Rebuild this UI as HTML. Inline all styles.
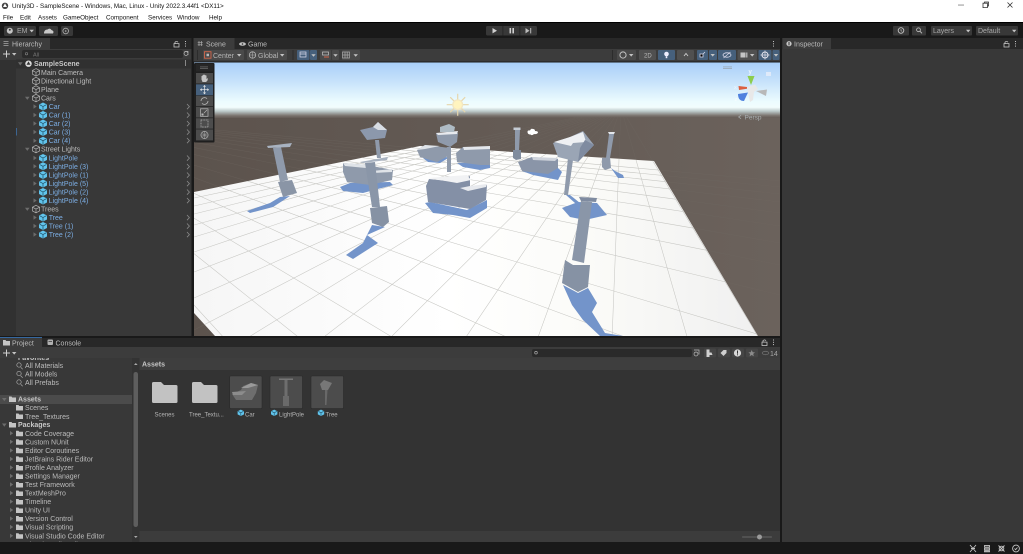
<!DOCTYPE html>
<html><head><meta charset="utf-8"><title>Unity3D</title>
<style>
html,body{margin:0;padding:0;background:#191919;overflow:hidden;width:1023px;height:554px}
svg{display:block;position:absolute;left:0;top:0;overflow:hidden;filter:blur(.3px)}
text{font-family:"Liberation Sans",sans-serif;font-size:7px;fill:#bcbcbc}
.k{fill:#111;font-size:6.3px}
.b{fill:#c8c8c8;font-weight:bold}
.p{fill:#7caee4}
.s{font-size:6px;fill:#b4b4b4}
</style></head><body>
<svg width="1023" height="554" viewBox="0 0 1023 554" xmlns="http://www.w3.org/2000/svg">
<defs>
<linearGradient id="sky" x1="0" y1="0" x2="0" y2="1">
<stop offset="0" stop-color="#a9cff9"/><stop offset=".35" stop-color="#c8e3fb"/><stop offset=".7" stop-color="#ecfcfe"/><stop offset=".8" stop-color="#f2fdfd"/><stop offset=".87" stop-color="#bcc9c9"/><stop offset=".95" stop-color="#7a736e"/><stop offset="1" stop-color="#5f5650"/>
</linearGradient>
<linearGradient id="gr" x1="0" y1="0" x2="1" y2="0"><stop offset="0" stop-color="#5c534d"/><stop offset="1" stop-color="#6b625c"/></linearGradient>
<linearGradient id="pl" x1="0" y1="0" x2="1" y2="0"><stop offset="0" stop-color="#f6f6f6"/><stop offset=".45" stop-color="#ffffff"/><stop offset=".7" stop-color="#fbfbf8"/><stop offset="1" stop-color="#f0f0f0"/></linearGradient>
<clipPath id="plc"><polygon points="194,192 420,146 654,161 758,336 215,336 194,313"/></clipPath>
<clipPath id="gc"><rect x="194" y="117" width="586" height="219"/></clipPath>
<clipPath id="lc"><rect x="0" y="358" width="132" height="184"/></clipPath>
<path id="fam" d="M621 108L194 198M621 108L194 206M621 108L194 214M621 108L194 225M621 108L194 237M621 108L194 252M621 108L194 272M621 108L194 298M621 108L194 330M621 108L244 340M621 108L320 340M621 108L388 340M621 108L464 340M621 108L537 340M621 108L612 340M621 108L688 340M621 108L760 340M17 112L780 181M17 112L780 187M17 112L780 194M17 112L780 202M17 112L780 213M17 112L780 226M17 112L780 243M17 112L780 265M17 112L780 295M17 112L777 340M17 112L633 340M17 112L513 340M17 112L397 340M17 112L302 340M17 112L226 340"/>
<g id="pf"><path d="M4 0L8 2V6L4 8L0 6V2Z" fill="#61c4ec"/><path d="M0.6 2.2L4 4L7.4 2.2M4 4V7.6" stroke="#1f4a5e" stroke-width=".7" fill="none"/></g>
<g id="go"><path d="M4 .3L7.6 2.2V5.9L4 7.8L.4 5.9V2.2Z M.6 2.3L4 4.1L7.4 2.3M4 4.1V7.6" stroke="#b0b0b0" stroke-width=".7" fill="none"/></g>
<path id="ar" d="M0 0L3.2 2.2L0 4.4Z" fill="#6c6c6c"/>
<path id="ad" d="M0 0H4.6L2.3 3.2Z" fill="#6c6c6c"/>
<path id="ch" d="M0 0L2.4 2.6L0 5.2" stroke="#8a8a8a" stroke-width=".8" fill="none"/>
<path id="fo" d="M0 0H2.5L3.2 1H7V5.5H0Z" fill="#c4c4c4"/>
<circle id="mg" cx="3" cy="3" r="2.2" stroke="#aaa" stroke-width=".7" fill="none"/>
<g id="dts"><rect x="0" y="0" width="1" height="1" fill="#c4c4c4"/><rect x="0" y="2.3" width="1" height="1" fill="#c4c4c4"/><rect x="0" y="4.6" width="1" height="1" fill="#c4c4c4"/></g>
<g id="lk"><rect x="0" y="2.6" width="5" height="3.4" fill="none" stroke="#c4c4c4" stroke-width=".8"/><path d="M1 2.6V1.2Q2.5 -.4 4 1.2" stroke="#c4c4c4" stroke-width=".8" fill="none"/></g>
<path id="wd" d="M0 0H4.4L2.2 2.6Z" fill="#c4c4c4"/>
</defs>

<!-- base -->
<rect width="1023" height="554" fill="#191919"/>
<rect width="1023" height="22.5" fill="#fff"/>
<rect y="22" width="1023" height="1" fill="#000"/>

<!-- title & menu -->
<circle cx="5" cy="5.8" r="3.2" fill="#444"/><path d="M5 3.4L7 7H3Z" fill="#fff"/>
<text class="k" x="12" y="8.2">Unity3D - SampleScene - Windows, Mac, Linux - Unity 2022.3.44f1 &lt;DX11&gt;</text>
<text class="k" x="3" y="19.3">File</text><text class="k" x="20" y="19.3">Edit</text><text class="k" x="38" y="19.3">Assets</text><text class="k" x="63" y="19.3">GameObject</text><text class="k" x="106" y="19.3">Component</text><text class="k" x="148" y="19.3">Services</text><text class="k" x="177" y="19.3">Window</text><text class="k" x="209" y="19.3">Help</text>
<rect x="958" y="4.6" width="6" height=".9" fill="#888"/>
<path d="M983 3.2h4.4v4.4h-4.4zM984.5 3.2v-1.2h4v4h-1.1" stroke="#333" stroke-width=".8" fill="none"/>
<path d="M1007.5 2.5l5 5m0-5l-5 5" stroke="#333" stroke-width=".8"/>

<!-- toolbar -->
<rect x="4" y="26" width="32" height="10" rx="1.5" fill="#383838"/>
<circle cx="9.8" cy="30.8" r="3" fill="#c4c4c4"/><circle cx="9.8" cy="29.8" r="1" fill="#383838"/>
<text x="17" y="33.2" style="fill:#a8a8a8">EM</text><use href="#wd" x="29.5" y="29.8"/>
<rect x="39" y="26" width="19" height="10" rx="1.5" fill="#383838"/>
<path d="M44 33.5H53Q54.5 31 51.5 30Q50 27.5 47.5 29.5Q44 29.5 44 33.5Z" fill="#c8c8c8"/>
<rect x="61" y="26" width="12" height="10" rx="1.5" fill="#383838"/>
<circle cx="65.7" cy="31" r="2.8" fill="none" stroke="#b0b0b0" stroke-width=".8"/><circle cx="65.7" cy="31" r=".8" fill="#b0b0b0"/>

<rect x="486" y="26" width="51" height="9.5" rx="1.5" fill="#383838"/>
<rect x="502.5" y="26" width=".8" height="9.5" fill="#222"/><rect x="519.5" y="26" width=".8" height="9.5" fill="#222"/>
<path d="M492.5 28L497 30.7L492.5 33.4Z" fill="#d0d0d0"/>
<rect x="509.5" y="28" width="1.6" height="5.4" fill="#d0d0d0"/><rect x="512.4" y="28" width="1.6" height="5.4" fill="#d0d0d0"/>
<path d="M525.5 28L529.5 30.7L525.5 33.4Z" fill="#bbb"/><rect x="530.2" y="28" width="1" height="5.4" fill="#bbb"/>

<rect x="893" y="26" width="16" height="9.5" rx="1" fill="#383838"/>
<circle cx="901" cy="30.5" r="2.8" fill="none" stroke="#c4c4c4" stroke-width=".9"/><path d="M901 29v1.8l1.2.6" stroke="#c4c4c4" stroke-width=".6" fill="none"/>
<rect x="912" y="26" width="14" height="9.5" rx="1" fill="#383838"/>
<circle cx="918.5" cy="29.8" r="1.9" fill="none" stroke="#c4c4c4" stroke-width=".8"/><path d="M920 31.3l2 2" stroke="#c4c4c4" stroke-width=".9"/>
<rect x="931" y="26" width="41" height="9.5" rx="1" fill="#383838"/>
<text x="933" y="33" style="fill:#a8a8a8">Layers</text><use href="#wd" x="966" y="29.8"/>
<rect x="976" y="26" width="42" height="9.5" rx="1" fill="#383838"/>
<text x="978" y="33" style="fill:#a8a8a8">Default</text><use href="#wd" x="1012" y="29.8"/>

<!-- Hierarchy panel -->
<rect x="0" y="38" width="191.5" height="11" fill="#282828"/>
<rect x="0" y="38" width="50" height="11" fill="#3c3c3c"/>
<path d="M3.5 41.5h5M3.5 43.5h5M3.5 45.5h5" stroke="#a8a8a8" stroke-width=".8"/>
<text x="12" y="46.4">Hierarchy</text>
<use href="#lk" x="174" y="41"/><use href="#dts" x="185" y="41"/>
<rect x="0" y="49" width="191.5" height="11" fill="#3c3c3c"/>
<path d="M3 54h7M6.5 50.5v7" stroke="#d0d0d0" stroke-width="1"/><use href="#wd" x="12" y="53"/>
<rect x="22" y="50" width="161" height="8" rx="2" fill="#2a2a2a"/>
<circle cx="26.5" cy="53.7" r="1.2" fill="none" stroke="#888" stroke-width=".6"/>
<text x="33" y="56.3" style="font-size:5.5px;fill:#777">All</text>
<path d="M184.5 51.5h3.5v3.5M186 55.5a2 2 0 1 1 .01 0" stroke="#bbb" stroke-width=".7" fill="none"/>
<rect x="0" y="60" width="191.5" height="276" fill="#383838"/>
<rect x="0" y="60" width="16" height="276" fill="#313131"/>
<rect x="16" y="59.5" width="175" height="9" fill="#303030"/>
<rect x="16" y="128" width=".9" height="7.5" fill="#3c6a9c"/>
<rect x="185" y="60" width="1" height="6" fill="#888"/>

<use href="#ad" x="18" y="62.3"/>
<circle cx="28.5" cy="63.7" r="3.2" fill="#ddd"/><path d="M28.5 61.4l2 3.4h-4z" fill="#333"/>
<text class="b" x="34" y="66.2">SampleScene</text>
<use href="#go" x="32" y="68.3"/><text x="41" y="75">Main Camera</text>
<use href="#go" x="32" y="77"/><text x="41" y="83.5">Directional Light</text>
<use href="#go" x="32" y="85.5"/><text x="41" y="92">Plane</text>
<use href="#ad" x="25" y="96.7"/><use href="#go" x="32" y="94"/><text x="41" y="100.5">Cars</text>

<use href="#ar" x="33.5" y="104.3"/><use href="#pf" x="39" y="102.5"/><text class="p" x="48.7" y="109">Car</text><use href="#ch" x="187" y="104"/>
<use href="#ar" x="33.5" y="112.8"/><use href="#pf" x="39" y="111"/><text class="p" x="48.7" y="117.5">Car (1)</text><use href="#ch" x="187" y="112.5"/>
<use href="#ar" x="33.5" y="121.3"/><use href="#pf" x="39" y="119.5"/><text class="p" x="48.7" y="126">Car (2)</text><use href="#ch" x="187" y="121"/>
<use href="#ar" x="33.5" y="129.8"/><use href="#pf" x="39" y="128"/><text class="p" x="48.7" y="134.5">Car (3)</text><use href="#ch" x="187" y="129.5"/>
<use href="#ar" x="33.5" y="138.5"/><use href="#pf" x="39" y="136.7"/><text class="p" x="48.7" y="143.2">Car (4)</text><use href="#ch" x="187" y="138"/>

<use href="#ad" x="25" y="147.7"/><use href="#go" x="32" y="145"/><text x="41" y="151.5">Street Lights</text>
<use href="#ar" x="33.5" y="155.8"/><use href="#pf" x="39" y="154"/><text class="p" x="48.7" y="160.5">LightPole</text><use href="#ch" x="187" y="155.5"/>
<use href="#ar" x="33.5" y="164.1"/><use href="#pf" x="39" y="162.3"/><text class="p" x="48.7" y="168.8">LightPole (3)</text><use href="#ch" x="187" y="164"/>
<use href="#ar" x="33.5" y="172.8"/><use href="#pf" x="39" y="171"/><text class="p" x="48.7" y="177.5">LightPole (1)</text><use href="#ch" x="187" y="172.5"/>
<use href="#ar" x="33.5" y="181.3"/><use href="#pf" x="39" y="179.5"/><text class="p" x="48.7" y="186">LightPole (5)</text><use href="#ch" x="187" y="181"/>
<use href="#ar" x="33.5" y="189.8"/><use href="#pf" x="39" y="188"/><text class="p" x="48.7" y="194.5">LightPole (2)</text><use href="#ch" x="187" y="189.5"/>
<use href="#ar" x="33.5" y="198.3"/><use href="#pf" x="39" y="196.5"/><text class="p" x="48.7" y="203">LightPole (4)</text><use href="#ch" x="187" y="198"/>

<use href="#ad" x="25" y="207.7"/><use href="#go" x="32" y="205"/><text x="41" y="211.5">Trees</text>
<use href="#ar" x="33.5" y="215.3"/><use href="#pf" x="39" y="213.5"/><text class="p" x="48.7" y="220">Tree</text><use href="#ch" x="187" y="215"/>
<use href="#ar" x="33.5" y="223.8"/><use href="#pf" x="39" y="222"/><text class="p" x="48.7" y="228.5">Tree (1)</text><use href="#ch" x="187" y="223.5"/>
<use href="#ar" x="33.5" y="232.3"/><use href="#pf" x="39" y="230.5"/><text class="p" x="48.7" y="237">Tree (2)</text><use href="#ch" x="187" y="232"/>

<!-- Scene panel header -->
<rect x="193.5" y="38" width="586.5" height="11" fill="#282828"/>
<rect x="193.5" y="38" width="41" height="11" fill="#3c3c3c"/>
<path d="M199 41v5M201.5 41v5M197.7 42.3h5M197.7 44.8h5" stroke="#aaa" stroke-width=".7"/>
<text x="206" y="46.4">Scene</text>
<ellipse cx="242.5" cy="44" rx="3.4" ry="1.8" fill="#c4c4c4"/><circle cx="242.5" cy="44" r=".8" fill="#282828"/>
<text x="248" y="46.4">Game</text>
<use href="#dts" x="773" y="41"/>
<rect x="193.5" y="49" width="586.5" height="12.5" fill="#3c3c3c"/>
<rect x="197" y="50" width="1" height="10" fill="#2c2c2c"/>
<rect x="203" y="50" width="41" height="10" rx="1" fill="#4a4a4a"/>
<rect x="204.5" y="51.7" width="6.5" height="6.5" fill="none" stroke="#d2664a" stroke-width=".9"/><rect x="206.5" y="53.7" width="2.5" height="2.5" fill="#bbb"/>
<text x="213" y="58" style="fill:#b4b4b4">Center</text><use href="#wd" x="237" y="54"/>
<rect x="247" y="50" width="40" height="10" rx="1" fill="#4a4a4a"/>
<circle cx="252.5" cy="55" r="3.2" fill="none" stroke="#b8b8b8" stroke-width=".8"/><path d="M249.5 55h6M252.5 52v6" stroke="#b8b8b8" stroke-width=".5"/>
<text x="258" y="58" style="fill:#b4b4b4">Global</text><use href="#wd" x="280" y="54"/>
<rect x="292.5" y="50" width="1" height="10" fill="#2c2c2c"/>
<rect x="297" y="50" width="12.5" height="10" rx="1" fill="#46607c"/><rect x="310" y="50" width="7" height="10" rx="1" fill="#46607c"/>
<path d="M300 52h6v5h-6zM300 54h6" stroke="#dde" stroke-width=".7" fill="none"/><use href="#wd" x="311.3" y="54.2"/>
<rect x="320" y="50" width="11" height="10" rx="1" fill="#4a4a4a"/><rect x="332" y="50" width="7" height="10" rx="1" fill="#4a4a4a"/>
<path d="M322.5 52h6v3h-6z" stroke="#c4c4c4" stroke-width=".7" fill="none"/><path d="M324 57h5" stroke="#d2664a" stroke-width="1"/><use href="#wd" x="333.3" y="54.2"/>
<rect x="342" y="50" width="18" height="10" rx="1" fill="#4a4a4a"/>
<path d="M342.5 52h7v6h-7zM345 52v6M347.2 52v6M342.5 55h7" stroke="#aaa" stroke-width=".7" fill="none"/><use href="#wd" x="353.5" y="54.2"/>

<rect x="612" y="50" width="1" height="10" fill="#2c2c2c"/>
<rect x="617" y="50" width="19" height="10" rx="1" fill="#4a4a4a"/>
<circle cx="623" cy="55" r="3.1" fill="none" stroke="#c4c4c4" stroke-width="1"/><use href="#wd" x="629" y="54"/>
<rect x="639" y="50" width="17" height="10" rx="1" fill="#505050"/><text x="644" y="57.6" style="font-size:6px">2D</text>
<rect x="658" y="50" width="17" height="10" rx="1" fill="#46607c"/>
<circle cx="666.5" cy="54" r="2.3" fill="#eef"/><rect x="665.7" y="56.2" width="1.6" height="2" fill="#eef"/>
<rect x="677" y="50" width="17" height="10" rx="1" fill="#505050"/><path d="M684 56l2-2.5 2 2.5" stroke="#ccc" fill="none" stroke-width=".9"/>
<rect x="697" y="50" width="11" height="10" rx="1" fill="#46607c"/><rect x="709" y="50" width="8" height="10" rx="1" fill="#46607c"/>
<path d="M700 57v-3h3v3zM703 54l2-2" stroke="#dde" stroke-width=".8"/><use href="#wd" x="710.5" y="54"/>
<rect x="718" y="50" width="18" height="10" rx="1" fill="#46607c"/>
<ellipse cx="727" cy="55" rx="4" ry="2.2" fill="none" stroke="#dde" stroke-width=".8"/><path d="M723.5 58l7-6" stroke="#dde" stroke-width=".7"/>
<rect x="737.5" y="50" width="19.5" height="10" rx="1" fill="#505050"/><rect x="740.5" y="52.5" width="5" height="5" fill="#c4c4c4"/><rect x="746.2" y="52.5" width="1.2" height="5" fill="#c4c4c4"/><use href="#wd" x="750" y="54"/>
<rect x="758.5" y="50" width="13" height="10" rx="1" fill="#46607c"/><rect x="772.5" y="50" width="7" height="10" rx="1" fill="#46607c"/>
<circle cx="765" cy="55" r="3" fill="none" stroke="#e4e4ee" stroke-width="1"/><path d="M765 50.5v9M760.5 55h9" stroke="#e4e4ee" stroke-width=".7"/><use href="#wd" x="773.8" y="54"/>

<!-- Scene -->
<rect x="193.5" y="61.5" width="586.5" height="1.2" fill="#1c1c1c"/>
<rect x="194" y="62.5" width="586" height="56" fill="url(#sky)"/>
<rect x="194" y="118" width="586" height="218" fill="url(#gr)"/>
<g clip-path="url(#gc)"><use href="#fam" stroke="#726a64" stroke-width=".5" fill="none" opacity=".45"/></g>
<polygon points="194,192 420,146 654,161 758,336 215,336 194,313" fill="url(#pl)"/>
<g clip-path="url(#plc)"><use href="#fam" stroke="#c6c6c2" stroke-width=".55" fill="none"/></g>

<!-- sun -->
<g transform="translate(457.7 104.7)">
<path d="M0-11V11M-11 0H11M-7.5-7.5L7.5 7.5M-7.5 7.5L7.5-7.5" stroke="#e6d6ac" stroke-width="1.2"/>
<circle r="5.5" fill="#f3e7c2"/><circle r="4.2" fill="#fff4bf"/>
</g>

<!-- shadows -->
<g fill="#7394ca">
<polygon points="280,197 290,196 273,207 250,213 247,211 270,203"/>
<polygon points="372,225 385,227 367,235 378,243 353,259 346,255 363,243"/>
<polygon points="340,187 350,183 390,182 393,185 363,193 343,191"/>
<polygon points="425,203 430,202 467,210 487,200 487,208 470,218 453,215 433,213"/>
<polygon points="423,158 450,157 440,163 428,162"/>
<polygon points="457,163 490,162 490,168 480,170 463,167"/>
<polygon points="522,171 558,168 562,172 558,180 533,175"/>
<polygon points="562,208 578,202 597,203 607,215 585,220 570,217"/>
<polygon points="566,195 570,195 580,203 575,203"/>
<polygon points="611,168 615,171 623,175 624,178 618,178"/>
<polygon points="563,285 578,293 588,288 597,303 592,312 605,333 623,336 600,336 583,320 572,305"/>
</g>

<!-- objects -->
<g fill="#8f9aab">
<polygon points="273,148 281,147 288,180 280,182"/>
<polygon points="278,182 292,180 297,193 283,197" fill="#8a95a6"/>
<polygon points="267,146 292,143 290,147 268,148" fill="#a8b2c0"/>
<polygon points="375,140 379,140 381,158 377,158"/>
<polygon points="360,130 373,127 378,122 387,130 385,138 367,140" fill="#8c98ac"/>
<polygon points="373,127 378,122 387,130 378,130" fill="#d8dde4"/>
<polygon points="343,163 367,165 393,170 392,180 370,185 347,182 343,172"/>
<polygon points="343,163 367,165 366,168 345,166" fill="#dfe3e8"/>
<polygon points="372,171 392,169 392,172 373,173" fill="#dfe3e8"/>
<polygon points="365,163 375,162 380,207 372,207" fill="#8a96a8"/>
<polygon points="370,208 387,206 389,222 383,227 372,223" fill="#8692a4"/>
<polygon points="360,162 388,157 387,160 363,163" fill="#a8b2c0"/>
<polygon points="417,150 425,145 450,148 450,155 437,162 420,157"/>
<polygon points="417,150 425,145 440,146 425,149" fill="#dfe3e8"/>
<polygon points="456,153 463,147 490,148 490,165 480,165 457,162"/>
<polygon points="463,147 490,146 490,149 464,150" fill="#e4e7ec"/>
<polygon points="447,147 451,147 451,172 447,172"/>
<polygon points="436,133 458,133 457,142 450,147 438,142"/>
<polygon points="436,133 458,131 457,134 438,135" fill="#e8eaee"/>
<polygon points="440,127 449,124 455,127 454,132 440,132" fill="#aebbc4"/>
<polygon points="426,186 429,179 457,182 470,176 470,187 487,185 486,200 470,209 428,202" fill="#8490a6"/>
<polygon points="428,178 467,175 471,180 457,183" fill="#f1f2f4"/>
<polygon points="460,188 470,186 487,184 486,187 468,191" fill="#e8eaee"/>
<polygon points="515,130 520,130 519,150 515,150"/>
<polygon points="513,150 521,150 521,159 516,160 513,158" fill="#808c9e"/>
<rect x="513.5" y="127.5" width="7" height="2.5" fill="#c4cbd4"/>
<polygon points="518,162 532,157 558,159 558,168 548,174 522,171" fill="#8a95a8"/>
<polygon points="532,157 558,158 555,161 533,160" fill="#cfd4dc"/>
<polygon points="568,158 573,160 568,195 564,195"/>
<polygon points="553,143 570,137 583,131 594,145 578,162 558,157" fill="#9aa5b5"/>
<polygon points="554,142 570,137 583,132 586,142 573,143 571,146" fill="#eef0f3"/>
<polygon points="585,140 594,145 578,162 580,148" fill="#7f8ba0"/>
<polygon points="609,134 614,134 610,158 606,158"/>
<polygon points="602,158 610,157 611,168 605,170 602,167"/>
<polygon points="608,132 615,132 614,134 609,134" fill="#e4e7ec"/>
<polygon points="581,201 592,202 584,263 572,260" fill="#8a96a8"/>
<polygon points="565,260 573,265 590,265 588,287 578,292 562,283" fill="#8692a4"/>
<polygon points="579,197 597,198 596,202 581,201" fill="#7f8ba0"/>
</g>
<path d="M527.5 132q0-2 2.5-1.5q1-2.5 3-1.5q2 0 2 2q3 0 3 1.5q-1 2-4 1.5q-2 2-3.5 .5q-3 0-3-2.5z" fill="#fff"/>

<!-- Gizmo -->
<rect x="723" y="66.5" width="9" height=".8" fill="#9aa8b5"/><rect x="723" y="68" width="9" height=".8" fill="#9aa8b5"/>
<rect x="766" y="72" width="5" height="4" fill="#dfeafa"/>
<g>
<polygon points="747.5,76 754.5,76 751,85" fill="#8ccd4d"/>
<polygon points="738.5,86 739,90 747,88.7 747,87" fill="#dc5f40"/>
<path d="M738 94L748 92.5L744 101Q738 101 738 94Z" fill="#4f81de"/>
<polygon points="767,89.5 766,96 756,91" fill="#b8b8b8"/>
<polygon points="747,87 755,84.5 758,89 754,92 753,100 750,102 748,92" fill="#e8e8e8"/>
<text x="748.5" y="73.5" style="font-size:6px;fill:#fff;opacity:.75;font-weight:bold">y</text>
<text x="734" y="89" style="font-size:5.5px;fill:#fff;opacity:.6">x</text>
<text x="734.5" y="101" style="font-size:5.5px;fill:#fff;opacity:.6">z</text>
</g>
<path d="M741 115.3l-2.4 1.7l2.4 1.7" stroke="#a8aeb0" stroke-width=".7" fill="none"/>
<text x="744.5" y="119.5" style="font-size:6.5px;fill:#a8aeb0">Persp</text>

<!-- Scene tools overlay -->
<rect x="194" y="63" width="20.5" height="79.5" rx="1" fill="#1f1f1f"/>
<rect x="196" y="64" width="17" height="7.5" fill="#262626"/>
<rect x="200" y="66.5" width="8" height=".8" fill="#666"/><rect x="200" y="68" width="8" height=".8" fill="#666"/>
<rect x="196" y="73" width="17" height="10.5" fill="#4c4c4c"/>
<rect x="196" y="84.3" width="17" height="11" fill="#46607c"/>
<rect x="196" y="95.8" width="17" height="10.5" fill="#4c4c4c"/>
<rect x="196" y="107" width="17" height="10.5" fill="#4c4c4c"/>
<rect x="196" y="118.2" width="17" height="10.5" fill="#4c4c4c"/>
<rect x="196" y="129.4" width="17" height="11" fill="#4c4c4c"/>
<path d="M201.5 79.5v-3.5l1 0v-1l1 0v-.5h1v.5h1v.5h1v3.5l1.5-1-.5 2.5-1.5 1.5h-3.5z" fill="#c4c4c4"/>
<path d="M204.5 85.5v8M200.5 89.7h8M203.4 86.7l1.1-1.2 1.1 1.2M203.4 92.5l1.1 1.2 1.1-1.2M201.7 88.6l-1.2 1.1 1.2 1.1M207.3 88.6l1.2 1.1-1.2 1.1" stroke="#e8e8e8" stroke-width=".7" fill="none"/>
<path d="M201 101a3.6 3.6 0 0 1 6-2.4M208 101a3.6 3.6 0 0 1-6 2.4" stroke="#bbb" stroke-width=".8" fill="none"/>
<rect x="200.5" y="108.8" width="7.5" height="7.5" fill="none" stroke="#bbb" stroke-width=".7"/><rect x="201.5" y="113.5" width="2" height="2" fill="#bbb"/><path d="M204 113l3-3" stroke="#bbb" stroke-width=".6"/>
<rect x="201" y="120" width="7" height="7" fill="none" stroke="#bbb" stroke-width=".7" stroke-dasharray="1 .6"/>
<circle cx="204.5" cy="135" r="3.6" fill="none" stroke="#aaa" stroke-width=".7"/><path d="M200.5 135h8M204.5 131v8M202 132.5l5 5M207 132.5l-5 5" stroke="#aaa" stroke-width=".5"/>

<!-- Inspector -->
<rect x="782" y="38" width="241" height="11" fill="#282828"/>
<rect x="782.5" y="38" width="48.5" height="11" fill="#3c3c3c"/>
<circle cx="789" cy="43.7" r="2.6" fill="#c8c8c8"/><rect x="788.5" y="42" width="1" height="3.4" fill="#333"/>
<text x="794" y="46.4">Inspector</text>
<use href="#lk" x="1004" y="41"/><use href="#dts" x="1015" y="41"/>
<rect x="782" y="49" width="241" height="493" fill="#383838"/>

<!-- Project panel -->
<rect x="0" y="338" width="780" height="9" fill="#282828"/>
<rect x="0" y="338" width="42" height="9" fill="#3c3c3c"/>
<rect x="0" y="337" width="42" height=".9" fill="#3a72b0"/>
<use href="#fo" x="3" y="340"/>
<text x="12" y="345.5">Project</text>
<rect x="47.5" y="339.5" width="5.5" height="5.5" rx="1" fill="#b0b0b0"/><rect x="48.5" y="341" width="3.5" height=".7" fill="#333"/>
<text x="55.5" y="345.5">Console</text>
<use href="#lk" x="762" y="339.5"/><use href="#dts" x="773" y="339.5"/>
<rect x="0" y="347" width="780" height="11" fill="#3c3c3c"/>
<path d="M3 353h7M6.5 349.5v7" stroke="#d0d0d0" stroke-width="1"/><use href="#wd" x="12" y="352"/>
<rect x="532" y="349" width="160" height="8" rx="2" fill="#2a2a2a"/>
<circle cx="536" cy="352.7" r="1.3" fill="none" stroke="#aaa" stroke-width=".7"/>
<path d="M694 350h5v4.5M696 356a2 2 0 1 1 .01 0" stroke="#bbb" stroke-width=".7" fill="none"/>
<rect x="704" y="348.5" width="12" height="9" rx="1" fill="#454545"/><rect x="718" y="348.5" width="12" height="9" rx="1" fill="#454545"/><rect x="732" y="348.5" width="12" height="9" rx="1" fill="#454545"/><rect x="746" y="348.5" width="12" height="9" rx="1" fill="#454545"/>
<path d="M706.5 349.5h3v3h2l1 2.5h-3v2h-3z" fill="#d0d0d0"/>
<path d="M720.5 353l3-3h3v3l-3 3z" fill="#d0d0d0"/>
<circle cx="737.5" cy="353" r="3.6" fill="#d8d8d8"/><rect x="737" y="350.5" width="1" height="3.2" fill="#333"/><rect x="737" y="354.3" width="1" height="1" fill="#333"/>
<path d="M751.7 350l1 2.2 2.3.2-1.8 1.5.6 2.3-2.1-1.2-2.1 1.2.6-2.3-1.8-1.5 2.3-.2z" fill="#8c8c8c"/>
<ellipse cx="765.5" cy="353" rx="3.3" ry="1.7" fill="none" stroke="#6f6f6f" stroke-width=".8"/>
<text x="770" y="355.8" style="fill:#a8a8a8">14</text>

<rect x="0" y="358" width="132" height="184" fill="#383838"/>
<rect x="132" y="358" width="8" height="184" fill="#333"/>
<rect x="133.5" y="372" width="4.5" height="155" rx="2.2" fill="#5e5e5e"/>
<path d="M134 365l1.8-2 1.8 2z" fill="#aaa"/><path d="M134 536l1.8 2 1.8-2z" fill="#aaa"/>
<rect x="139.5" y="358" width="640.5" height="12" fill="#3e3e3e"/>
<rect x="139.5" y="370" width="640.5" height="161" fill="#333"/>
<rect x="139.5" y="531" width="640.5" height="11" fill="#3c3c3c"/>
<text class="b" x="142" y="366.5">Assets</text>
<rect x="742" y="536.5" width="30" height="1" rx=".5" fill="#666"/><circle cx="759.5" cy="537" r="2.5" fill="#9a9a9a"/>

<rect x="0" y="395" width="132" height="9" fill="#4b4b4b"/>
<g clip-path="url(#lc)">
<text class="b" x="18" y="359.8">Favorites</text>
<text x="25" y="546.8">Visual Studio Editor</text>
</g>
<use href="#mg" x="16" y="362"/><path d="M20.7 367.2l2 2" stroke="#aaa" stroke-width=".7"/><text x="25" y="368">All Materials</text>
<use href="#mg" x="16" y="370.5"/><path d="M20.7 375.7l2 2" stroke="#aaa" stroke-width=".7"/><text x="25" y="376.5">All Models</text>
<use href="#mg" x="16" y="379"/><path d="M20.7 384.2l2 2" stroke="#aaa" stroke-width=".7"/><text x="25" y="385.2">All Prefabs</text>

<use href="#ad" x="2" y="398"/><use href="#fo" x="9" y="396.5"/><text class="b" x="18" y="401.5">Assets</text>
<use href="#fo" x="16" y="405"/><text x="25" y="410.2">Scenes</text>
<use href="#fo" x="16" y="413.5"/><text x="25" y="418.8">Tree_Textures</text>
<use href="#ad" x="2" y="423.5"/><use href="#fo" x="9" y="422"/><text class="b" x="18" y="427.2">Packages</text>
<use href="#ar" x="10" y="431"/><use href="#fo" x="16" y="430.7"/><text x="25" y="435.8">Code Coverage</text>
<use href="#ar" x="10" y="439.6"/><use href="#fo" x="16" y="439.2"/><text x="25" y="444.4">Custom NUnit</text>
<use href="#ar" x="10" y="448.2"/><use href="#fo" x="16" y="447.8"/><text x="25" y="453">Editor Coroutines</text>
<use href="#ar" x="10" y="456.8"/><use href="#fo" x="16" y="456.4"/><text x="25" y="461.5">JetBrains Rider Editor</text>
<use href="#ar" x="10" y="465.3"/><use href="#fo" x="16" y="465"/><text x="25" y="470">Profile Analyzer</text>
<use href="#ar" x="10" y="473.8"/><use href="#fo" x="16" y="473.5"/><text x="25" y="478.5">Settings Manager</text>
<use href="#ar" x="10" y="482.3"/><use href="#fo" x="16" y="482"/><text x="25" y="487">Test Framework</text>
<use href="#ar" x="10" y="490.8"/><use href="#fo" x="16" y="490.5"/><text x="25" y="495.5">TextMeshPro</text>
<use href="#ar" x="10" y="499.4"/><use href="#fo" x="16" y="499"/><text x="25" y="504.2">Timeline</text>
<use href="#ar" x="10" y="507.8"/><use href="#fo" x="16" y="507.5"/><text x="25" y="512.5">Unity UI</text>
<use href="#ar" x="10" y="516.4"/><use href="#fo" x="16" y="516"/><text x="25" y="521.2">Version Control</text>
<use href="#ar" x="10" y="524.8"/><use href="#fo" x="16" y="524.5"/><text x="25" y="529.5">Visual Scripting</text>
<use href="#ar" x="10" y="533.6"/><use href="#fo" x="16" y="533.2"/><text x="25" y="538.5">Visual Studio Code Editor</text>

<!-- Asset grid -->
<path d="M152 383.5q0-1.5 1.5-1.5h7.5l3 3h12q1.5 0 1.5 1.5v15q0 1.5-1.5 1.5h-22.5q-1.5 0-1.5-1.5z" fill="#c2c2c2"/>
<path d="M192 383.5q0-1.5 1.5-1.5h7.5l3 3h12q1.5 0 1.5 1.5v15q0 1.5-1.5 1.5h-22.5q-1.5 0-1.5-1.5z" fill="#c2c2c2"/>
<rect x="229.7" y="376" width="32.3" height="32.5" rx="1" fill="#4c4c4c" stroke="#2a2a2a" stroke-width=".6"/>
<polygon points="232,394 241,390 243,386 251,383 258,385 256,393 252,400 236,400" fill="#6e6e6e"/>
<polygon points="241,388 251,383 258,385 248,388" fill="#9a9a9a"/>
<polygon points="232,392 246,391 242,395 233,395" fill="#8c8c8c"/>
<rect x="270" y="376" width="32.5" height="32.5" rx="1" fill="#4c4c4c" stroke="#2a2a2a" stroke-width=".6"/>
<rect x="279" y="378.5" width="14" height="1.5" fill="#777"/><rect x="284.5" y="380" width="3" height="19" fill="#6e6e6e"/><rect x="283" y="396" width="6" height="10" fill="#6a6a6a"/>
<rect x="311" y="376" width="32.5" height="32.5" rx="1" fill="#4c4c4c" stroke="#2a2a2a" stroke-width=".6"/>
<polygon points="320,384 324,380 332,383 328,390 322,390" fill="#777"/><polygon points="325,390 327.5,390 326.5,405 325,405" fill="#686868"/>
<text class="s" x="154.5" y="416.5">Scenes</text>
<text class="s" x="189" y="416.5">Tree_Textu...</text>
<use href="#pf" x="237" y="407" transform="translate(48 84) scale(.8)"/><text class="s" x="245" y="416.5">Car</text>
<use href="#pf" x="335.5" y="407" transform="translate(2.6 84) scale(.8)"/><text class="s" x="279" y="416.5">LightPole</text>
<use href="#pf" x="394" y="407" transform="translate(2.6 84) scale(.8)"/><text class="s" x="325.5" y="416.5">Tree</text>

<!-- Status bar -->
<rect x="0" y="542" width="1023" height="12" fill="#191919"/>
<g fill="none" stroke="#c4c4c4" stroke-width=".9">
<path d="M970 545l6 7m0-7l-6 7M971 548.5h4"/>
<rect x="984.5" y="545.5" width="5" height="1.6"/><rect x="984.5" y="548.2" width="5" height="1.6"/><rect x="984.5" y="550.8" width="5" height="1"/>
<circle cx="1001.5" cy="548.5" r="2.3"/><path d="M998.5 545.5l6 6m0-6l-6 6"/>
<circle cx="1016" cy="548.5" r="3.4"/><path d="M1014.5 548.5l1.1 1.2 1.9-2.2"/>
</g>
</svg>
</body></html>
